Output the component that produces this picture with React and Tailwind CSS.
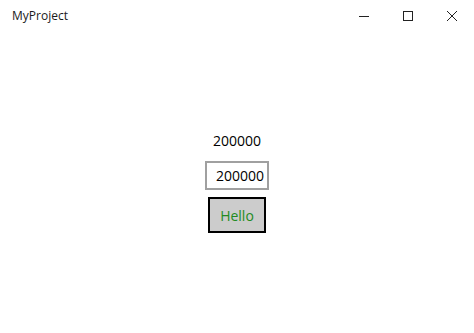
import React from "react";

const TitleBar = () => (
  <div className="flex h-8 items-center justify-between bg-white">
    <span className="pl-3 text-[12px] text-[#1a1a1a]">MyProject</span>
    <div className="flex h-full">
      {/* minimize */}
      <div className="flex h-full w-[44px] items-center justify-center">
        <svg width="10" height="10" viewBox="0 0 10 10">
          <path d="M0 5.5h10" stroke="#222" strokeWidth="1" />
        </svg>
      </div>
      {/* maximize */}
      <div className="flex h-full w-[44px] items-center justify-center">
        <svg width="10" height="10" viewBox="0 0 10 10">
          <rect x="0.5" y="0.5" width="9" height="9" fill="none" stroke="#222" strokeWidth="1" />
        </svg>
      </div>
      {/* close */}
      <div className="flex h-full w-[44px] items-center justify-center">
        <svg width="10" height="10" viewBox="0 0 10 10">
          <path d="M0 0L10 10M10 0L0 10" stroke="#222" strokeWidth="1" />
        </svg>
      </div>
    </div>
  </div>
);

export default function App() {
  return (
    <div className="h-[333px] w-[474px] overflow-hidden bg-white font-['Open_Sans',sans-serif]">
      <TitleBar />
      <div className="flex flex-col items-center pt-[99px]">
        <div className="h-5 text-[14px] leading-5 text-black">200000</div>
        <div className="mt-[10px] flex h-[29px] w-[64px] items-center border-2 border-[#a0a0a0] pl-[9px] text-[14px] text-black">
          200000
        </div>
        <button className="mt-[7px] flex h-[36px] w-[58px] items-center justify-center border-2 border-black bg-[#cccccc] text-[14px] text-[#228b22]">
          Hello
        </button>
      </div>
    </div>
  );
}
